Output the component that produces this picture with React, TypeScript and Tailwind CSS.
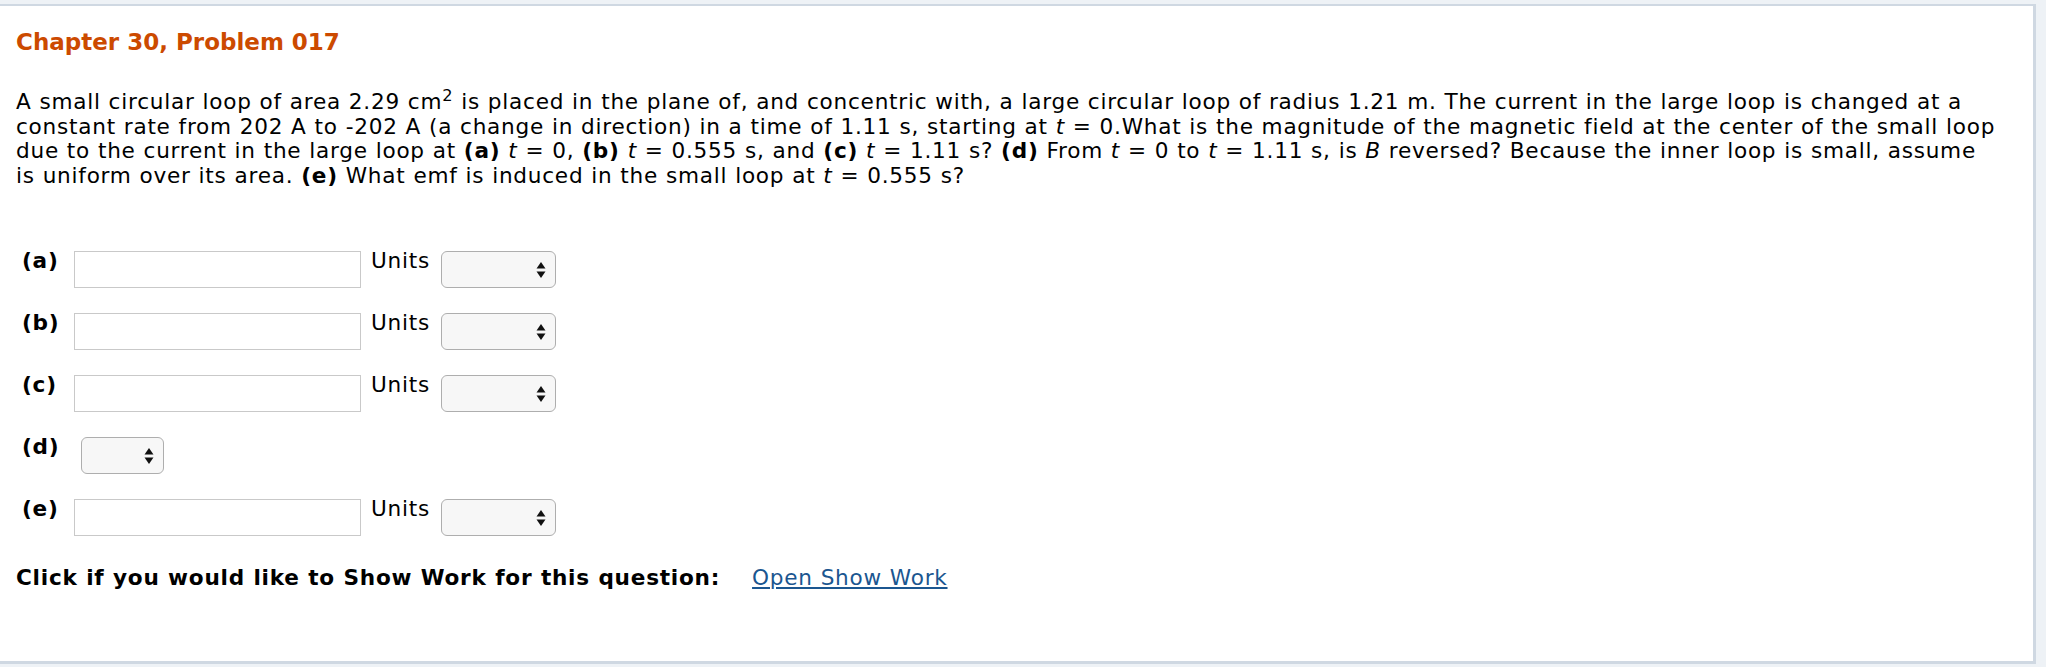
import React from 'react'

// one stepper-style select like the native Mac control in the screenshot
function Stepper({ width }: { width: string }) {
  return (
    <div
      className={`flex h-[37px] ${width} items-center justify-end rounded-[6px] border-[1.5px] border-[#aeaeae] bg-[#f7f7f7] pr-[9px]`}
    >
      <svg width="10" height="18" viewBox="0 0 10 18">
        <path d="M5 1 L9.5 7.5 L0.5 7.5 Z" fill="#111" />
        <path d="M0.5 10.5 L9.5 10.5 L5 17 Z" fill="#111" />
      </svg>
    </div>
  )
}

function AnswerRow({ label }: { label: string }) {
  return (
    <div className="flex items-start">
      <div className="-mt-[2px] w-[58px] pl-[6px] font-bold leading-[24px]">{label}</div>
      <div className="h-[37px] w-[287px] border border-[#c9c9c9] bg-white" />
      <div className="-mt-[2px] ml-[10px] w-[70px] leading-[24px]">Units</div>
      <Stepper width="w-[115px]" />
    </div>
  )
}

export default function App() {
  return (
    <div className="h-[667px] w-[2046px] bg-[#eef2f6] pt-[4px] font-['DejaVu_Sans',Verdana,sans-serif] text-[21.6px] tracking-[0.75px] [word-spacing:0.3px] text-black">
      <div className="h-[660px] w-[2036px] border-t-2 border-r-[3px] border-b-[3px] border-[#cfd8e2] bg-white pl-4">
        <h1 className="pt-[22px] text-[23px] font-bold leading-[28px] tracking-normal [word-spacing:0px] text-[#cc4a00]">
          Chapter 30, Problem 017
        </h1>

        <p className="mt-[34px] whitespace-nowrap leading-[24.5px]">
          A small circular loop of area 2.29 cm<sup>2</sup> is placed in the plane of, and concentric with, a large
          circular loop of radius 1.21 m. The current in the large loop is changed at a
          <br />
          constant rate from 202 A to -202 A (a change in direction) in a time of 1.11 s, starting at <i>t</i> =
          0.What is the magnitude of the magnetic field at the center of the small loop
          <br />
          due to the current in the large loop at <b>(a)</b> <i>t</i> = 0, <b>(b)</b> <i>t</i> = 0.555 s, and{' '}
          <b>(c)</b> <i>t</i> = 1.11 s? <b>(d)</b> From <i>t</i> = 0 to <i>t</i> = 1.11 s, is <i>B</i> reversed?
          Because the inner loop is small, assume
          <br />
          is uniform over its area. <b>(e)</b> What emf is induced in the small loop at <i>t</i> = 0.555 s?
        </p>

        <div className="mt-[63px] flex flex-col gap-[25px]">
          <AnswerRow label="(a)" />
          <AnswerRow label="(b)" />
          <AnswerRow label="(c)" />
          <div className="flex items-start">
            <div className="-mt-[2px] w-[65px] pl-[6px] font-bold leading-[24px]">(d)</div>
            <Stepper width="w-[83px]" />
          </div>
          <AnswerRow label="(e)" />
        </div>

        <div className="mt-[30px] flex items-center leading-[24px]">
          <span className="font-bold">Click if you would like to Show Work for this question:</span>
          <a href="#" className="ml-[32px] text-[#1b5690] underline underline-offset-2">
            Open Show Work
          </a>
        </div>
      </div>
    </div>
  )
}
